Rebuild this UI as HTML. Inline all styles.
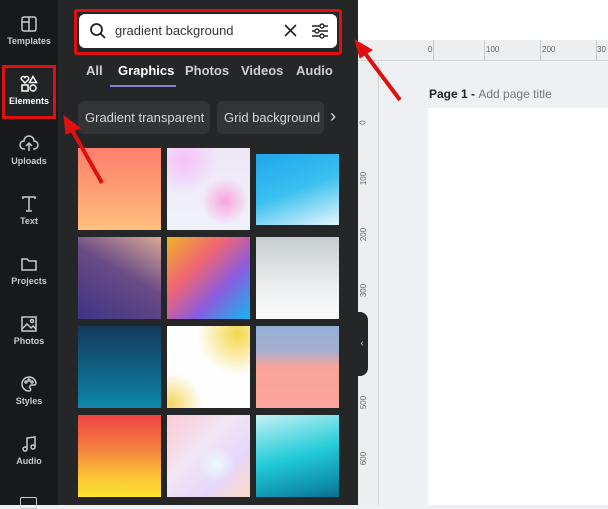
<!DOCTYPE html>
<html><head><style>
*{margin:0;padding:0;box-sizing:border-box}
body{width:608px;height:505px;overflow:hidden;position:relative;background:#eef0f3;font-family:"Liberation Sans",sans-serif}
.abs{position:absolute}
#side{left:0;top:0;width:58px;height:505px;background:#18191b}
.item{position:absolute;left:0;width:58px;text-align:center;color:#c9cacc;font-size:9px;font-weight:bold}
.item svg{display:block;margin:0 auto 3px}
#panel{left:58px;top:0;width:300px;height:505px;background:#252627}
.tile{position:absolute;width:83px;height:82px}
.tab{position:absolute;top:63px;color:#cfd0d2;font-size:13px;font-weight:bold}
.chip{position:absolute;top:101px;height:33px;border-radius:6px;background:#333436;color:#d6d7d9;font-size:13px;line-height:33px;padding-left:7px}
</style></head><body>
<div class="abs" style="left:358px;top:0;width:250px;height:40px;background:#fff"></div>
<div class="abs" style="left:358px;top:40px;width:250px;height:21px;background:#eceef0;border-bottom:1px solid #d2d5d8"></div>
<div class="abs" style="left:358px;top:61px;width:21px;height:444px;background:#eceef0;border-right:1px solid #d2d5d8"></div>
<div class="abs" style="left:428px;top:45px;font-size:8px;color:#666">0</div>
<div class="abs" style="left:486px;top:45px;font-size:8px;color:#666">100</div>
<div class="abs" style="left:542px;top:45px;font-size:8px;color:#666">200</div>
<div class="abs" style="left:597px;top:45px;font-size:8px;color:#666">30</div>
<div class="abs" style="left:433px;top:40px;width:1px;height:21px;background:#c8cbce"></div>
<div class="abs" style="left:484px;top:40px;width:1px;height:21px;background:#c8cbce"></div>
<div class="abs" style="left:540px;top:40px;width:1px;height:21px;background:#c8cbce"></div>
<div class="abs" style="left:596px;top:40px;width:1px;height:21px;background:#c8cbce"></div>
<div class="abs" style="left:361px;top:118px;font-size:8px;color:#666;transform:rotate(-90deg)">0</div>
<div class="abs" style="left:357px;top:174px;font-size:8px;color:#666;transform:rotate(-90deg)">100</div>
<div class="abs" style="left:357px;top:230px;font-size:8px;color:#666;transform:rotate(-90deg)">200</div>
<div class="abs" style="left:357px;top:286px;font-size:8px;color:#666;transform:rotate(-90deg)">300</div>
<div class="abs" style="left:357px;top:398px;font-size:8px;color:#666;transform:rotate(-90deg)">500</div>
<div class="abs" style="left:357px;top:454px;font-size:8px;color:#666;transform:rotate(-90deg)">600</div>
<div class="abs" style="left:429px;top:87px;font-size:12px;color:#222;font-weight:bold">Page 1 - <span style="color:#777;font-weight:normal">Add page title</span></div>
<div class="abs" style="left:428px;top:108px;width:180px;height:397px;background:#fff"></div>

<div id="side" class="abs">
<div class="item" style="top:15px"><svg width="18" height="18" viewBox="0 0 18 18" fill="none" stroke="#c9cacc" stroke-width="1.5"><rect x="2" y="2" width="14" height="14" rx="2"/><path d="M2 7h7M9 2v14"/></svg>Templates</div>
<div class="abs" style="left:2px;top:65px;width:54px;height:54px;border:3px solid #e01010;background:#222326"></div>
<div class="item" style="top:75px;color:#fff"><svg width="18" height="18" viewBox="0 0 18 18" fill="none" stroke="#fff" stroke-width="1.5"><path d="M5 8 1.5 4.5a2 2 0 0 1 3.5-2 2 2 0 0 1 3.5 2z"/><path d="M13 1.5l3.5 6h-7z"/><rect x="2" y="10" width="6" height="6"/><circle cx="13" cy="13" r="3"/></svg>Elements</div>
<div class="item" style="top:135px"><svg width="20" height="18" viewBox="0 0 20 18" fill="none" stroke="#c9cacc" stroke-width="1.5"><path d="M6 14H5a4 4 0 0 1 0-8 5 5 0 0 1 10 0 4 4 0 0 1 0 8h-1M10 16V8M7 11l3-3 3 3"/></svg>Uploads</div>
<div class="item" style="top:195px"><svg width="18" height="18" viewBox="0 0 18 18" fill="none" stroke="#c9cacc" stroke-width="1.5"><path d="M3 4V2h12v2M9 2v14M6 16h6"/></svg>Text</div>
<div class="item" style="top:255px"><svg width="18" height="18" viewBox="0 0 18 18" fill="none" stroke="#c9cacc" stroke-width="1.5"><path d="M2 4h5l2 2h7v9H2z"/></svg>Projects</div>
<div class="item" style="top:315px"><svg width="18" height="18" viewBox="0 0 18 18" fill="none" stroke="#c9cacc" stroke-width="1.5"><rect x="2" y="2" width="14" height="14"/><path d="M2 14l5-5 4 4 2-2 3 3"/><circle cx="12" cy="6" r="1.5"/></svg>Photos</div>
<div class="item" style="top:375px"><svg width="18" height="18" viewBox="0 0 18 18" fill="none" stroke="#c9cacc" stroke-width="1.5"><path d="M9 2a7 7 0 0 0 0 14c2 0 2-2 1-3s0-3 2-3h2a2 2 0 0 0 2-2 7 7 0 0 0-7-6z"/><circle cx="6" cy="7" r="1"/><circle cx="9" cy="5" r="1"/><circle cx="12" cy="7" r="1"/></svg>Styles</div>
<div class="item" style="top:435px"><svg width="18" height="18" viewBox="0 0 18 18" fill="none" stroke="#c9cacc" stroke-width="1.5"><path d="M7 14V3l8-1v10"/><circle cx="5" cy="14" r="2"/><circle cx="13" cy="12" r="2"/></svg>Audio</div>
<div class="abs" style="left:20px;top:497px;width:17px;height:12px;border:1.5px solid #c9cacc;border-radius:2px"></div>
</div>

<div id="panel" class="abs">
<div class="abs" style="left:16px;top:9px;width:268px;height:46px;border:3px solid #e01010;border-radius:3px"></div>
<div class="abs" style="left:21px;top:14px;width:258px;height:34px;background:#fff;border-radius:6px"></div>
<svg class="abs" style="left:31px;top:22px" width="18" height="18" viewBox="0 0 18 18" fill="none" stroke="#222" stroke-width="1.8"><circle cx="7.5" cy="7.5" r="5.5"/><path d="M11.5 11.5 16 16"/></svg>
<div class="abs" style="left:57px;top:23px;font-size:13px;color:#333">gradient background</div>
<svg class="abs" style="left:226px;top:24px" width="13" height="13" viewBox="0 0 13 13" stroke="#222" stroke-width="1.6"><path d="M1 1l11 11M12 1 1 12"/></svg>
<svg class="abs" style="left:253px;top:22px" width="18" height="18" viewBox="0 0 18 18" fill="#fff" stroke="#222" stroke-width="1.4"><path d="M1 4h16M1 9h16M1 14h16"/><circle cx="11" cy="4" r="2"/><circle cx="6" cy="9" r="2"/><circle cx="11" cy="14" r="2"/></svg>
<div class="tab" style="left:28px">All</div>
<div class="tab" style="left:60px;color:#fff">Graphics</div>
<div class="abs" style="left:52px;top:85px;width:66px;height:2px;background:#8b7fd6"></div>
<div class="tab" style="left:127px">Photos</div>
<div class="tab" style="left:183px">Videos</div>
<div class="tab" style="left:238px">Audio</div>
<div class="chip" style="left:20px;width:132px">Gradient transparent</div>
<div class="chip" style="left:159px;width:107px">Grid background</div>
<div class="abs" style="left:272px;top:106px;color:#ddd;font-size:18px">›</div>
<div class="tile" style="left:20px;top:148px;background:linear-gradient(#fe7e6c,#ff9a72 45%,#ffc07c)"></div>
<div class="tile" style="left:109px;top:148px;background:radial-gradient(circle at 70% 65%,#fba3dc 0,transparent 30%),radial-gradient(circle at 20% 15%,#f6c0f7 0,transparent 35%),linear-gradient(#eee6f6,#eef2fb)"></div>
<div class="tile" style="left:198px;top:154px;height:71px;background:linear-gradient(160deg,#1fa6ec,#3bc0ef 50%,#e6f6fc)"></div>
<div class="tile" style="left:20px;top:237px;background:linear-gradient(210deg,#d8a897,#6a4b86 45%,#3c3583)"></div>
<div class="tile" style="left:109px;top:237px;background:linear-gradient(135deg,#f1b328,#f06572 35%,#8b5ce0 65%,#12b6f0),linear-gradient(#f14b7a,#f14b7a)"></div>
<div class="tile" style="left:198px;top:237px;background:linear-gradient(#c6ccce,#eceef0 60%,#fbfbfb)"></div>
<div class="tile" style="left:20px;top:326px;background:linear-gradient(#153a5c,#0f5f82 50%,#0e88a8)"></div>
<div class="abs" style="left:135px;top:391px;width:22px;height:14px;border-radius:7px;background:#163e52;color:#fff;font-size:9px;text-align:center;line-height:14px">♛</div>
<div class="tile" style="left:109px;top:326px;background:radial-gradient(circle at 85% 10%,#f4d74a 0,transparent 40%),radial-gradient(circle at 5% 95%,#f3d660 0,transparent 28%),#fefefe"></div>
<div class="tile" style="left:198px;top:326px;background:linear-gradient(#94afd5,#a5b0ce 30%,#f9a49b 50%,#fca69c)"></div>
<div class="tile" style="left:20px;top:415px;background:linear-gradient(#ef4444,#f47e3e 40%,#fbc435 75%,#fde22f)"></div>
<div class="tile" style="left:109px;top:415px;background:radial-gradient(circle at 60% 60%,#eafcfc 0,transparent 25%),linear-gradient(135deg,#fcc8d4,#f1e6f4 40%,#e6d8fb 70%,#fdd9c4)"></div>
<div class="tile" style="left:198px;top:415px;background:linear-gradient(165deg,#c5f2f5,#22cbd8 50%,#0f8fab 85%,#0b6d8c)"></div>
</div>
<div class="abs" style="left:356px;top:312px;width:12px;height:64px;background:#252627;border-radius:0 8px 8px 0;color:#ccc;font-size:10px;line-height:64px;text-align:center">‹</div>

<svg class="abs" style="left:0;top:0" width="608" height="505">
<g stroke="#e01010" stroke-width="4" fill="#e01010">
<line x1="102" y1="183" x2="72" y2="130"/>
<polygon points="64,116 80,128 66,134" stroke-width="1"/>
<line x1="400" y1="100" x2="364" y2="52"/>
<polygon points="355,40 372,50 360,58" stroke-width="1"/>
</g></svg>
</body></html>
